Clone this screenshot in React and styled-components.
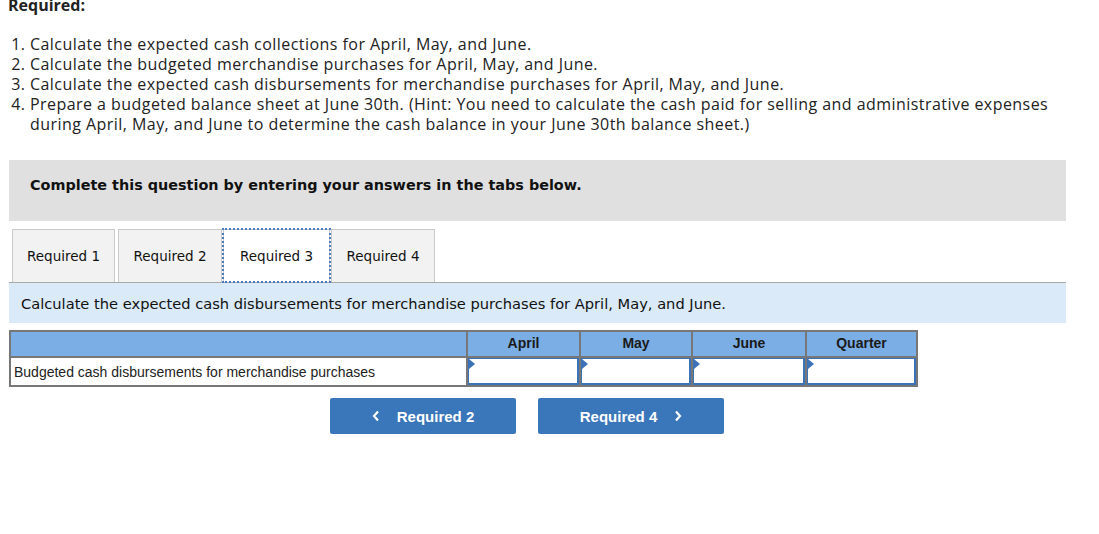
import React from 'react';
import styled, { createGlobalStyle } from 'styled-components';

const GlobalStyle = createGlobalStyle`
  html, body {
    margin: 0;
    padding: 0;
    background: #fff;
  }
`;

const Page = styled.div`
  width: 1099px;
  height: 534px;
  overflow: hidden;
  position: relative;
`;

const Intro = styled.div`
  font-family: 'Open Sans', Lato, sans-serif;
  font-size: 16px;
  letter-spacing: 0.45px;
  color: #222;
  margin-top: -5px;
  padding-left: 8px;
`;

const Heading = styled.div`
  font-weight: bold;
  line-height: 20px;
  letter-spacing: 0;
`;

const Steps = styled.ol`
  margin: 19px 0 0;
  padding: 0 0 0 22px;
  line-height: 20px;
  white-space: nowrap;
`;

const Banner = styled.div`
  margin: 26px 33px 0 9px;
  height: 61px;
  box-sizing: border-box;
  background: #e0e0e0;
  padding: 16px 0 0 21px;
  line-height: 18px;
  font-family: 'DejaVu Sans', Verdana, sans-serif;
  font-weight: bold;
  font-size: 14.4px;
  color: #111;
`;

const TabRow = styled.div`
  display: flex;
  align-items: flex-end;
  margin: 8px 33px 0 9px;
  padding-left: 3px;
  height: 53px;
  border-bottom: 1px solid #a8a8a8;
`;

const Tab = styled.div`
  display: flex;
  align-items: center;
  justify-content: center;
  height: 53px;
  box-sizing: border-box;
  width: ${p => p.$w}px;
  margin-left: ${p => p.$gap}px;
  font-family: 'DejaVu Sans', Verdana, sans-serif;
  font-size: 13.5px;
  color: #111;
  background: ${p => (p.$active ? '#fff' : '#f2f2f2')};
  border: 1px solid #cacaca;
  border-bottom: none;
  outline: ${p => (p.$active ? '2px dotted #4a7cbf' : 'none')};
  outline-offset: -1px;
  position: relative;
  z-index: ${p => (p.$active ? 1 : 0)};
`;

const Prompt = styled.div`
  margin: 0 33px 0 9px;
  height: 40px;
  background: #daeaf8;
  display: flex;
  align-items: center;
  padding-left: 12px;
  font-family: 'DejaVu Sans', Verdana, sans-serif;
  font-size: 14.65px;
  color: #111;
`;

const Table = styled.table`
  margin: 7px 0 0 9px;
  width: 907px;
  table-layout: fixed;
  border-collapse: collapse;
  font-family: 'Liberation Sans', Arial, sans-serif;
  font-size: 14px;
  color: #222;
`;

const HeadCell = styled.th`
  background: #7aaee4;
  border: 2px solid #777;
  height: 24px;
  padding: 0;
  font-weight: bold;
  text-align: center;
  vertical-align: top;
  line-height: 22px;
  color: #1a1a1a;
`;

const LabelCell = styled.td`
  border: 2px solid #777;
  height: 27px;
  padding: 0 0 0 3px;
  text-align: left;
  white-space: nowrap;
`;

const InputCell = styled.td`
  border: 2px solid #777;
  padding: 0;
  height: 27px;
`;

const Field = styled.div`
  height: 27px;
  box-sizing: border-box;
  border: 2px solid #3b72b8;
  border-left-width: 1px;
  border-top-width: 1px;
  background: #fff;
  position: relative;

  &::before {
    content: '';
    position: absolute;
    left: 0;
    top: 0;
    border-top: 5px solid transparent;
    border-bottom: 5px solid transparent;
    border-left: 6px solid #3b72b8;
  }
`;

const NavRow = styled.div`
  display: flex;
  gap: 22px;
  margin: 11px 0 0 330px;
`;

const NavButton = styled.button`
  width: 186px;
  height: 36px;
  border: none;
  border-radius: 2px;
  background: #3a76ba;
  color: #fff;
  font-family: 'Liberation Sans', Arial, sans-serif;
  font-weight: bold;
  font-size: 15px;
  display: flex;
  align-items: center;
  justify-content: center;
  gap: 17px;
  padding: 0;
`;

const Chevron = ({ dir }) => (
  <svg width="8" height="12" viewBox="0 0 8 12">
    <path
      d={dir === 'left' ? 'M6 1.5 L2 6 L6 10.5' : 'M2 1.5 L6 6 L2 10.5'}
      fill="none"
      stroke="#fff"
      strokeWidth="2.2"
    />
  </svg>
);

const tabs = [
  { label: 'Required 1', w: 103, gap: 0 },
  { label: 'Required 2', w: 104, gap: 3 },
  { label: 'Required 3', w: 107, gap: 1, active: true },
  { label: 'Required 4', w: 104, gap: 1 },
];

const columns = [
  { label: 'April', w: 113 },
  { label: 'May', w: 112 },
  { label: 'June', w: 114 },
  { label: 'Quarter', w: 111 },
];

const App = () => (
  <Page>
    <GlobalStyle />
    <Intro>
      <Heading>Required:</Heading>
      <Steps>
        <li>Calculate the expected cash collections for April, May, and June.</li>
        <li>Calculate the budgeted merchandise purchases for April, May, and June.</li>
        <li>
          Calculate the expected cash disbursements for merchandise purchases for April, May,
          and June.
        </li>
        <li>
          Prepare a budgeted balance sheet at June 30th. (Hint: You need to calculate the cash
          paid for selling and administrative expenses
          <br />
          during April, May, and June to determine the cash balance in your June 30th balance
          sheet.)
        </li>
      </Steps>
    </Intro>

    <Banner>Complete this question by entering your answers in the tabs below.</Banner>

    <TabRow>
      {tabs.map(t => (
        <Tab key={t.label} $w={t.w} $gap={t.gap} $active={t.active}>
          {t.label}
        </Tab>
      ))}
    </TabRow>

    <Prompt>
      Calculate the expected cash disbursements for merchandise purchases for April, May, and
      June.
    </Prompt>

    <Table>
      <colgroup>
        <col style={{ width: 457 }} />
        {columns.map(c => (
          <col key={c.label} style={{ width: c.w }} />
        ))}
      </colgroup>
      <thead>
        <tr>
          <HeadCell />
          {columns.map(c => (
            <HeadCell key={c.label}>{c.label}</HeadCell>
          ))}
        </tr>
      </thead>
      <tbody>
        <tr>
          <LabelCell>Budgeted cash disbursements for merchandise purchases</LabelCell>
          {columns.map(c => (
            <InputCell key={c.label}>
              <Field />
            </InputCell>
          ))}
        </tr>
      </tbody>
    </Table>

    <NavRow>
      <NavButton>
        <Chevron dir="left" />
        Required 2
      </NavButton>
      <NavButton>
        Required 4
        <Chevron dir="right" />
      </NavButton>
    </NavRow>
  </Page>
);

export default App;
